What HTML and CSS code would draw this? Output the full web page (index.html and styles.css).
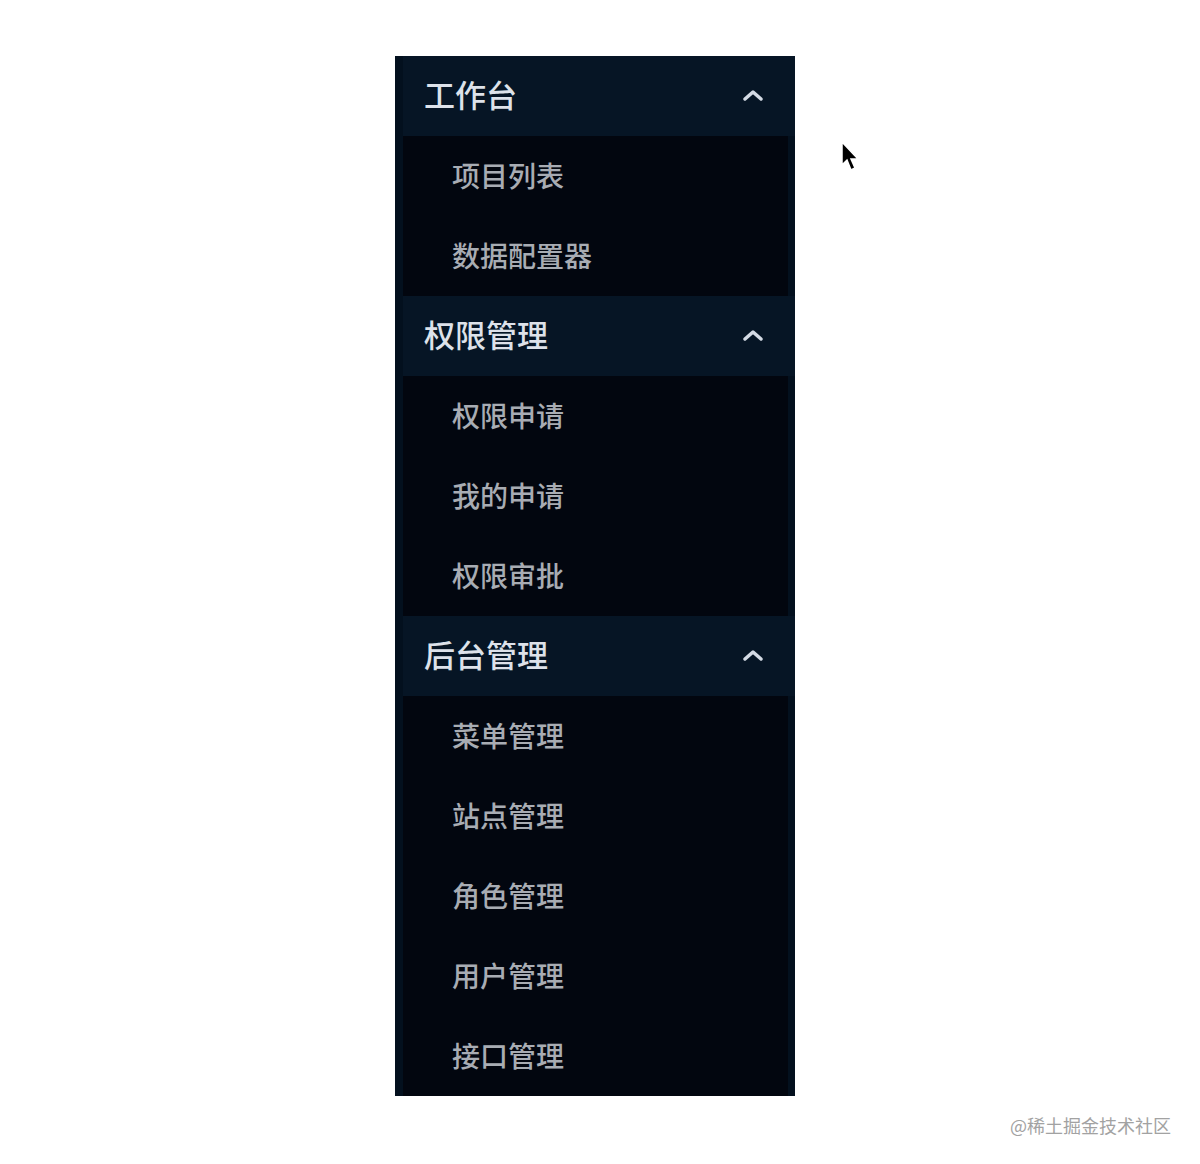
FILE: index.html
```html
<!DOCTYPE html>
<html lang="zh">
<head>
<meta charset="utf-8">
<link rel="stylesheet" href="styles.css">
</head>
<body>
<div class="stage">
  <nav class="menu">
    <div class="group">
      <div class="group-head"><span>工作台</span><svg class="chev" viewBox="0 0 20 12"><path d="M2 10 L10 3 L18 10"/></svg></div>
      <ul class="sub">
        <li>项目列表</li>
        <li>数据配置器</li>
      </ul>
    </div>
    <div class="group">
      <div class="group-head"><span>权限管理</span><svg class="chev" viewBox="0 0 20 12"><path d="M2 10 L10 3 L18 10"/></svg></div>
      <ul class="sub">
        <li>权限申请</li>
        <li>我的申请</li>
        <li>权限审批</li>
      </ul>
    </div>
    <div class="group">
      <div class="group-head"><span>后台管理</span><svg class="chev" viewBox="0 0 20 12"><path d="M2 10 L10 3 L18 10"/></svg></div>
      <ul class="sub">
        <li>菜单管理</li>
        <li>站点管理</li>
        <li>角色管理</li>
        <li>用户管理</li>
        <li>接口管理</li>
      </ul>
    </div>
  </nav>
  <svg class="cursor" viewBox="0 0 20 32"><path d="M1 1 L1 24 L6 19 L10 29 L14 27 L10 18 L17 18 Z" fill="#000" stroke="#fff" stroke-width="1.5"/></svg>
  <div class="watermark">@稀土掘金技术社区</div>
</div>
</body>
</html>
```
FILE: styles.css
```css
* { box-sizing: border-box; }
html, body { margin: 0; padding: 0; background: #ffffff; }
body { font-family: "Noto Sans CJK SC", "Noto Sans", sans-serif; }
.stage { position: relative; width: 1200px; height: 1164px; padding-top: 56px; padding-left: 395px; }
.menu { width: 400px; background: #03101e; padding-left: 8px; display: flex; flex-direction: column; }
.group-head { height: 80px; background: #061525; display: flex; align-items: center; justify-content: space-between; padding-left: 21px; padding-right: 32px; color: #dde2ea; font-size: 31px; font-weight: 500; line-height: 1; }
.group-head span { margin-top: -5px; }
.chev { width: 20px; height: 12px; margin-top: -2px; fill: none; stroke: #d3dae4; stroke-width: 3.5; stroke-linecap: round; stroke-linejoin: round; }
.sub { list-style: none; margin: 0 7px 0 0; padding: 0; background: #02060f; }
.sub li { height: 80px; display: flex; align-items: center; padding-left: 49px; color: #a8acb3; font-size: 28px; font-weight: 500; line-height: 1; padding-bottom: 3px; }
.cursor { position: absolute; left: 841px; top: 141px; width: 20px; height: 32px; }
.watermark { position: absolute; left: 1010px; top: 1113px; color: #a2a2a2; font-size: 18px; line-height: 24px; }
```
